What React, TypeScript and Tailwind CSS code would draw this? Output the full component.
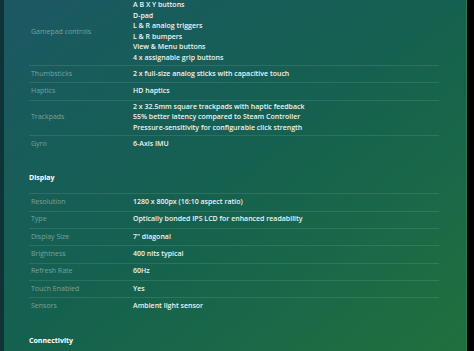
const gamepad = [
  "A B X Y buttons",
  "D-pad",
  "L & R analog triggers",
  "L & R bumpers",
  "View & Menu buttons",
  "4 x assignable grip buttons",
];

const controls: [string, string[]][] = [
  ["Gamepad controls", gamepad],
  ["Thumbsticks", ["2 x full-size analog sticks with capacitive touch"]],
  ["Haptics", ["HD haptics"]],
  [
    "Trackpads",
    [
      "2 x 32.5mm square trackpads with haptic feedback",
      "55% better latency compared to Steam Controller",
      "Pressure-sensitivity for configurable click strength",
    ],
  ],
  ["Gyro", ["6-Axis IMU"]],
];

const display: [string, string[]][] = [
  ["Resolution", ["1280 x 800px (16:10 aspect ratio)"]],
  ["Type", ["Optically bonded IPS LCD for enhanced readability"]],
  ["Display Size", ["7\" diagonal"]],
  ["Brightness", ["400 nits typical"]],
  ["Refresh Rate", ["60Hz"]],
  ["Touch Enabled", ["Yes"]],
  ["Sensors", ["Ambient light sensor"]],
];

const SpecTable = ({ rows }: { rows: [string, string[]][] }) => (
  <div className="flex flex-col">
    {rows.map(([label, values]) => (
      <div
        key={label}
        className="flex items-center min-h-[17.3px] border-t border-white/10 py-[1.3px]"
      >
        <div className="w-[104px] pl-[2px] text-[#76a29f] font-medium">{label}</div>
        <div className="flex flex-col text-[#eef5f3] font-semibold">
          {values.map((v) => (
            <div key={v}>{v}</div>
          ))}
        </div>
      </div>
    ))}
  </div>
);

export default function App() {
  return (
    <div
      className="w-[474px] h-[351px] overflow-hidden flex bg-black text-[7px] leading-[10.6px]"
      style={{ fontFamily: '"Open Sans", "Noto Sans", sans-serif' }}
    >
      <div className="w-[4px] bg-[#0f3438]" />
      <div className="w-[463px] border-r border-[#2a7a55] bg-gradient-to-br from-[#1b5863] via-[#15614f] to-[#20703d] pl-[25px] pr-[27px] overflow-hidden">
        <div className="-mt-[2.2px]">
          <SpecTable rows={controls} />
        </div>
        <div className="pt-[21px] pb-[9.5px] font-bold text-white">Display</div>
        <SpecTable rows={display} />
        <div className="pt-[21.5px] font-bold text-white">Connectivity</div>
      </div>
    </div>
  );
}
